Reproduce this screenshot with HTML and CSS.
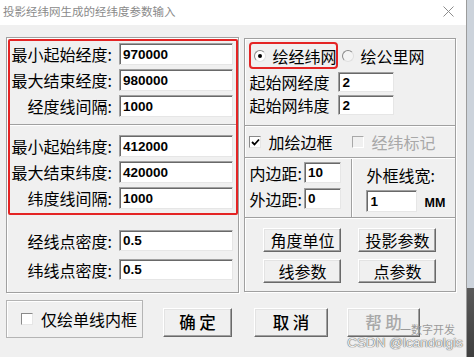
FILE: index.html
```html
<!DOCTYPE html>
<html lang="zh-CN">
<head>
  <meta charset="UTF-8">
  <meta name="viewport" content="width=device-width, initial-scale=1.0">
  <title>投影经纬网生成的经纬度参数输入</title>
  <link rel="stylesheet" href="styles.css">
</head>
<body>

  <div class="screen">
    <div class="window">
      <div class="titlebar">
        <span class="title">投影经纬网生成的经纬度参数输入</span>
        <svg class="close" width="11" height="11" viewBox="0 0 11 11">
          <path d="M0.5 0.5 L10.5 10.5 M10.5 0.5 L0.5 10.5" stroke="#8c8c8c" stroke-width="1" fill="none"/>
        </svg>
      </div>

      <div class="client">
        <div class="groups">

          <!-- 左侧：经纬度范围 -->
          <div class="group group-left">
            <div class="redbox">
              <div class="form-grid">
                <span class="lbl">最小起始经度:</span><span class="field">970000</span>
                <span class="lbl">最大结束经度:</span><span class="field">980000</span>
                <span class="lbl">经度线间隔:</span><span class="field">1000</span>
              </div>
              <div class="sep"></div>
              <div class="form-grid">
                <span class="lbl">最小起始纬度:</span><span class="field">412000</span>
                <span class="lbl">最大结束纬度:</span><span class="field">420000</span>
                <span class="lbl">纬度线间隔:</span><span class="field">1000</span>
              </div>
            </div>
            <div class="form-grid density">
              <span class="lbl">经线点密度:</span><span class="field">0.5</span>
              <span class="lbl">纬线点密度:</span><span class="field">0.5</span>
            </div>
          </div>

          <!-- 右侧：网格设置 -->
          <div class="group group-right">
            <div class="sec sec-a">
              <div class="radio-row">
                <span class="radio-hl"><span class="radio on"></span>绘经纬网</span>
                <span class="radio-item"><span class="radio"></span>绘公里网</span>
              </div>
              <div class="start-row"><span class="lbl">起始网经度</span><span class="field small">2</span></div>
              <div class="start-row"><span class="lbl">起始网纬度</span><span class="field small">2</span></div>
            </div>
            <div class="sep"></div>
            <div class="sec sec-b">
              <span class="check-item">
                <span class="check">
                  <svg width="9" height="9" viewBox="0 0 9 9"><path d="M1 4 L3.5 6.5 L8 1.5" stroke="#000" stroke-width="1.8" fill="none"/></svg>
                </span>加绘边框
              </span>
              <span class="check-item disabled"><span class="check"></span>经纬标记</span>
            </div>
            <div class="sep"></div>
            <div class="sec sec-c">
              <div class="margin-cell">
                <div class="margin-row"><span class="lbl">内边距:</span><span class="field tiny">10</span></div>
                <div class="margin-row"><span class="lbl">外边距:</span><span class="field tiny">0</span></div>
              </div>
              <div class="vsep"></div>
              <div class="width-cell">
                <span class="lbl">外框线宽:</span>
                <div class="width-row"><span class="field mid">1</span><span class="unit">MM</span></div>
              </div>
            </div>
            <div class="sep"></div>
            <div class="sec sec-d">
              <button class="btn">角度单位</button>
              <button class="btn">投影参数</button>
              <button class="btn">线参数</button>
              <button class="btn">点参数</button>
            </div>
          </div>
        </div>

        <div class="bottom-row">
          <div class="inner-box">
            <span class="check-item"><span class="check"></span>仅绘单线内框</span>
          </div>
          <button class="btn big ok">确 定</button>
          <button class="btn big cancel">取 消</button>
          <button class="btn big help" disabled>帮 助</button>
        </div>
      </div>
    </div>
    <div class="edge"></div>

    <div class="watermark">
      <span class="wm-top">一数字开发</span>
      <span class="wm-main">CSDN @lcandolgis</span>
    </div>
  </div>

</body>
</html>
```

FILE: styles.css
```css
body {
  margin: 0;
  font-family: "Noto Sans CJK SC", "Liberation Sans", sans-serif;
  color: #000;
  background-color: #f0f0f0;
}

.screen {
  position: relative;
  display: flex;
  width: 474px;
  height: 357px;
  overflow: hidden;
}

.window {
  width: 467px;
  height: 357px;
  box-sizing: border-box;
  border-right: 1px solid #9c9c9c;
  background-color: #f0f0f0;
}

.edge {
  width: 7px;
  height: 357px;
  background: linear-gradient(to bottom, #ccd3db 0, #ccd3db 288px, #5a5a5a 288px, #3f3f3f 357px);
}

/* 标题栏 */
.titlebar {
  height: 25px;
  display: flex;
  align-items: center;
  justify-content: space-between;
  padding: 0 12px 0 3px;
  background-color: #fff;
}

.title {
  font-size: 11.5px;
  color: #8a8a8a;
  line-height: 1;
  margin-top: -1px;
}

.close {
  margin-top: -2px;
}

.client {
  padding: 12px 10px 0 6px;
}

.groups {
  display: flex;
  align-items: flex-start;
  gap: 5px;
}

.group {
  box-sizing: border-box;
  border: 1px solid #a0a0a0;
  box-shadow: inset 1px 1px #fff, 1px 1px #fff;
}

.group-left {
  width: 234px;
  height: 256px;
}

.group-right {
  width: 212px;
  height: 254px;
  margin-top: 1px;
}

.lbl {
  font-size: 16px;
  line-height: 18px;
  white-space: nowrap;
}

/* 输入框 */
.field {
  box-sizing: border-box;
  height: 22px;
  display: flex;
  align-items: center;
  padding-left: 3px;
  background-color: #fff;
  border: 1px solid;
  border-color: #a0a0a0 #e6e6e6 #e6e6e6 #a0a0a0;
  box-shadow: inset 1px 1px #696969;
  font-family: "Liberation Sans", sans-serif;
  font-weight: bold;
  font-size: 13.5px;
}

.field.small {
  width: 56px;
  height: 20px;
}

.field.tiny {
  width: 37px;
  height: 21px;
}

.field.mid {
  width: 51px;
}

/* 红框 */
.redbox {
  margin: 1px 0 0 1px;
  width: 230px;
  height: 176px;
  box-sizing: border-box;
  border: 2px solid #e42424;
  border-radius: 2px;
  padding: 2px 0 0 0;
}

.form-grid {
  display: grid;
  grid-template-columns: 102px 114px;
  column-gap: 7px;
  row-gap: 4px;
  grid-auto-rows: 22px;
  align-items: center;
}

.form-grid .lbl {
  text-align: right;
}

.sep {
  border-top: 1px solid #a0a0a0;
  border-bottom: 1px solid #fff;
}

.redbox .sep {
  margin: 7px 0 9px;
}

.density {
  margin: 15px 0 0 3px;
  row-gap: 8px;
  grid-auto-rows: 21px;
}

.density .field {
  height: 21px;
}

/* 右侧分区 */
.sec {
  box-sizing: border-box;
}

.sec-a {
  height: 86px;
  padding: 3px 0 0 4px;
}

.radio-row {
  display: flex;
  align-items: center;
  font-size: 16px;
}

.radio-hl {
  box-sizing: border-box;
  width: 89px;
  height: 27px;
  display: flex;
  align-items: center;
  padding-left: 3px;
  border: 2px solid #e42424;
  border-radius: 4px;
}

.radio-item {
  display: flex;
  align-items: center;
  margin-left: 4px;
}

.radio {
  box-sizing: border-box;
  width: 12px;
  height: 12px;
  margin-right: 6px;
  border-radius: 50%;
  border: 1px solid;
  border-color: #8a8a8a #e0e0e0 #e0e0e0 #8a8a8a;
  background-color: #fff;
  position: relative;
}

.radio.on::after {
  content: "";
  position: absolute;
  left: 3px;
  top: 3px;
  width: 4px;
  height: 4px;
  border-radius: 50%;
  background-color: #000;
}

.radio-item .radio {
  background-color: #f4f4f4;
}

.start-row {
  display: flex;
  align-items: center;
  gap: 9px;
  margin-top: 3px;
}

.sec-b {
  height: 30px;
  display: flex;
  align-items: center;
  padding-left: 4px;
}

.check-item {
  display: flex;
  align-items: center;
  font-size: 16px;
  white-space: nowrap;
}

.check {
  box-sizing: border-box;
  width: 12px;
  height: 12px;
  margin-right: 7px;
  display: flex;
  align-items: center;
  justify-content: center;
  background-color: #fff;
  border: 1px solid;
  border-color: #8a8a8a #e6e6e6 #e6e6e6 #8a8a8a;
}

.check-item.disabled {
  margin-left: 20px;
  color: #a8a8a8;
}

.check-item.disabled .check {
  background-color: #f0f0f0;
  border-color: #a8a8a8 #fff #fff #a8a8a8;
}

.sec-c {
  height: 58px;
  display: flex;
}

.margin-cell {
  width: 106px;
  padding: 3px 0 0 4px;
  box-sizing: border-box;
  display: flex;
  flex-direction: column;
  gap: 5px;
}

.margin-row {
  display: flex;
  align-items: center;
  gap: 2px;
}

.vsep {
  width: 0;
  border-left: 1px solid #a0a0a0;
  border-right: 1px solid #fff;
}

.width-cell {
  padding: 4px 0 0 13px;
}

.width-row {
  display: flex;
  align-items: center;
  margin-top: 3px;
}

.unit {
  margin-left: 7px;
  font-family: "Liberation Sans", sans-serif;
  font-weight: bold;
  font-size: 12.5px;
  padding-top: 3px;
}

.sec-d {
  height: 72px;
  padding: 9px 0 0 18px;
  display: grid;
  grid-template-columns: 78px 78px;
  grid-auto-rows: 24px;
  column-gap: 17px;
  row-gap: 7px;
}

/* 按钮 */
.btn {
  box-sizing: border-box;
  margin: 0;
  padding: 0;
  font-family: "Noto Sans CJK SC", sans-serif;
  font-size: 16px;
  color: #000;
  background-color: #f0f0f0;
  border: 1px solid;
  border-color: #fff #696969 #696969 #fff;
  box-shadow: inset -1px -1px #a0a0a0, inset 1px 1px #e3e3e3;
  line-height: 1;
}

.bottom-row {
  display: flex;
  align-items: flex-start;
  margin-top: 7px;
}

.inner-box {
  box-sizing: border-box;
  width: 137px;
  height: 38px;
  display: flex;
  align-items: center;
  padding-left: 14px;
  border: 1px solid #b4b4b4;
  box-shadow: inset 1px 1px #fff;
}

.inner-box .check {
  margin-right: 8px;
}

.btn.big {
  height: 29px;
  margin-top: 8px;
  font-weight: 500;
  font-size: 16.5px;
}

.btn.ok {
  width: 69px;
  margin-left: 20px;
}

.btn.cancel {
  width: 74px;
  margin-left: 22px;
}

.btn.help {
  width: 73px;
  margin-left: 19px;
  color: #a8a8a8;
}

/* 水印 */
.watermark {
  position: absolute;
  right: 11px;
  top: 323px;
  display: flex;
  flex-direction: column;
  align-items: flex-end;
  white-space: nowrap;
  pointer-events: none;
}

.wm-top {
  font-size: 11px;
  color: #9a9a9a;
  line-height: 12px;
  margin-right: 8px;
}

.wm-main {
  font-family: "Liberation Sans", sans-serif;
  font-size: 13.5px;
  line-height: 16px;
  color: #efefef;
  text-shadow: 0 0 1px #555, 0 0 1px #555;
}
```
